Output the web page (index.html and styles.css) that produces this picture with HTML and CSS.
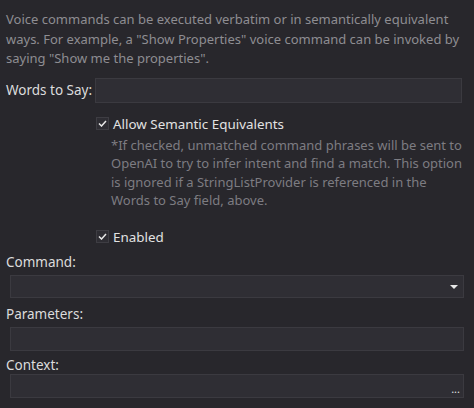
FILE: index.html
```html
<!DOCTYPE html>
<html lang="en">
<head>
    <meta charset="UTF-8">
    <title>Voice Command</title>
    <link rel="stylesheet" href="styles.css">
</head>
<body>
    <div class="panel">
        <p class="intro">Voice commands can be executed verbatim or in semantically equivalent ways. For example, a "Show Properties" voice command can be invoked by saying "Show me the properties".</p>

        <div class="row">
            <label class="label">Words to Say:</label>
            <div class="box grow"></div>
        </div>

        <div class="options">
            <div class="check">
                <span class="tick"><svg width="9" height="7" viewBox="0 0 9 7"><path d="M1 3.5 L3.5 6 L8 1" fill="none" stroke="#e8e8e8" stroke-width="1.5"/></svg></span>
                <span class="check-text">Allow Semantic Equivalents</span>
            </div>
            <p class="hint">*If checked, unmatched command phrases will be sent to OpenAI to try to infer intent and find a match. This option is ignored if a StringListProvider is referenced in the Words to Say field, above.</p>
            <div class="check enabled">
                <span class="tick"><svg width="9" height="7" viewBox="0 0 9 7"><path d="M1 3.5 L3.5 6 L8 1" fill="none" stroke="#e8e8e8" stroke-width="1.5"/></svg></span>
                <span class="check-text">Enabled</span>
            </div>
        </div>

        <div class="field">
            <label class="label">Command:</label>
            <div class="box combo"><span class="arrow"></span></div>
        </div>
        <div class="field">
            <label class="label">Parameters:</label>
            <div class="box tall"></div>
        </div>
        <div class="field tight">
            <label class="label">Context:</label>
            <div class="box combo tall"><span class="dots">...</span></div>
        </div>
    </div>
</body>
</html>
```

FILE: styles.css
```css
body {
    margin: 0;
    background: #28272c;
    font-family: "Noto Sans", "Open Sans", sans-serif;
    font-size: 13px;
    color: #dcdcdc;
}

.panel {
    width: 460px;
    padding: 10px 0 0 6px;
}

.intro {
    margin: 0;
    color: #8e8d92;
    line-height: 19.5px;
}

.row {
    display: flex;
    align-items: center;
    margin-top: 9px;
}

.label {
    display: block;
    color: #dcdcdc;
    font-size: 13.5px;
}

.row .label {
    width: 89px;
}

.box {
    height: 23px;
    background: #2f2e34;
    border: 1px solid #3b3a40;
    box-sizing: border-box;
}

.box.tall {
    height: 24px;
}

.grow {
    flex: 1;
    height: 25px;
    margin-right: 4px;
}

.options {
    padding-left: 90px;
    margin-top: 12px;
}

.check {
    display: flex;
    align-items: center;
    gap: 4px;
}

.tick {
    width: 11px;
    height: 11px;
    border: 1px solid #3e3d43;
    background: #2e2d33;
    display: flex;
    align-items: center;
    justify-content: center;
}

.check-text {
    font-size: 13.4px;
    color: #e2e2e2;
}

.hint {
    margin: 3px 0 0 15px;
    color: #7d7c82;
    line-height: 18.5px;
}

.enabled {
    margin-top: 18px;
}

.field {
    margin-top: 7px;
}

.field .label {
    height: 19px;
    margin-bottom: 3px;
}

.field.tight {
    margin-top: 5px;
}

.field.tight .label {
    height: 18px;
    margin-bottom: 0;
}

.field .box {
    margin-left: 4px;
    width: 454px;
}

.combo {
    position: relative;
}

.arrow {
    position: absolute;
    right: 5px;
    top: 9px;
    border-left: 4px solid transparent;
    border-right: 4px solid transparent;
    border-top: 4px solid #e8e8e8;
}

.dots {
    position: absolute;
    right: 3px;
    bottom: 3px;
    font-size: 11px;
    color: #e0e0e0;
    line-height: 11px;
}
```
